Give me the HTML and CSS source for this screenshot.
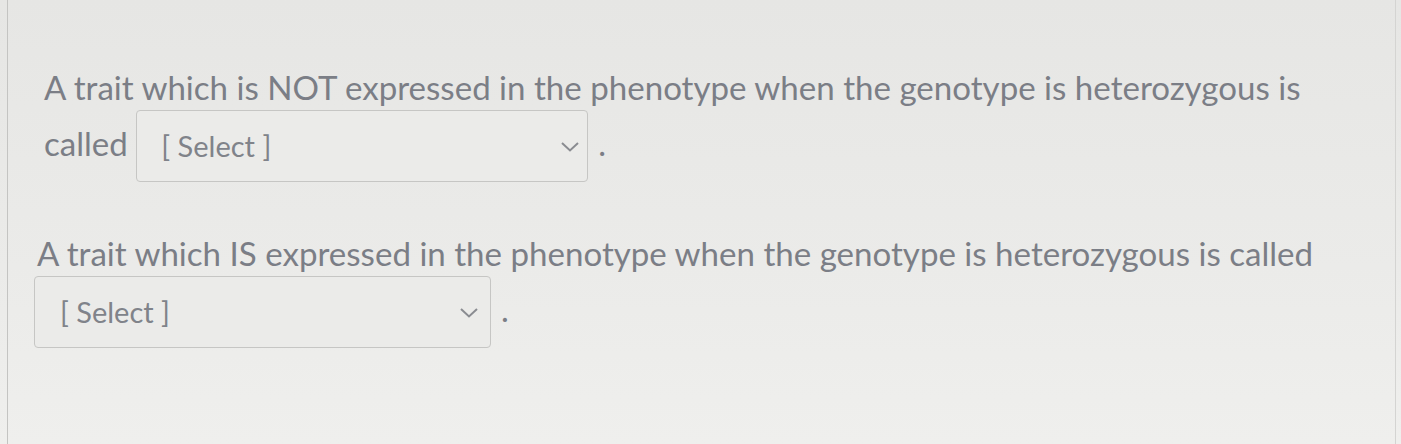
FILE: index.html
```html
<!DOCTYPE html>
<html lang="en">
<head>
    <meta charset="UTF-8">
    <meta name="viewport" content="width=device-width, initial-scale=1.0">
    <title>Quiz question</title>
    <link rel="stylesheet" href="styles.css">
</head>
<body>
    <div class="question-card">
        <p class="question first">
            <span>A trait which is NOT expressed in the phenotype when the genotype is heterozygous is</span>
            <span>called</span> <span class="dropdown"><span class="dropdown-label">[ Select ]</span><svg class="chevron" width="18" height="10" viewBox="0 0 18 10"><path d="M1 1 L9 8.5 L17 1" fill="none" stroke="#8a8c91" stroke-width="2"/></svg></span><span class="stop">.</span>
        </p>
        <p class="question second">
            <span>A trait which IS expressed in the phenotype when the genotype is heterozygous is called</span>
            <span class="dropdown wide"><span class="dropdown-label">[ Select ]</span><svg class="chevron" width="18" height="10" viewBox="0 0 18 10"><path d="M1 1 L9 8.5 L17 1" fill="none" stroke="#8a8c91" stroke-width="2"/></svg></span><span class="stop">.</span>
        </p>
    </div>
</body>
</html>
```

FILE: styles.css
```css
html, body {
    height: 100%;
}
body {
    margin: 0;
    font-family: Lato, "Liberation Sans", sans-serif;
    color: #7b7e86;
    background: linear-gradient(to bottom, #e6e6e4 0%, #ebebe9 60%, #efefed 100%);
}
.question-card {
    margin: 0 5px 0 7px;
    height: 100%;
    box-sizing: border-box;
    border-left: 1px solid #c4c4c2;
    border-right: 1px solid #d4d4d2;
    padding: 64px 20px 0 36px;
}
.question {
    margin: 0;
    font-size: 33.1px;
    line-height: 46px;
}
.question.second {
    margin-top: 48px;
    margin-left: -7px;
}
.dropdown {
    display: inline-flex;
    align-items: center;
    justify-content: space-between;
    box-sizing: border-box;
    width: 452px;
    height: 72px;
    margin: 0 8px 0 0;
    padding: 0 8px 0 24px;
    border: 1px solid #c6c6c4;
    border-radius: 4px;
    background: #ebebe9;
    font-size: 29px;
    color: #80838a;
    vertical-align: -1px;
}
.dropdown.wide {
    width: 457px;
    margin-left: -3px;
    padding-left: 25px;
    padding-right: 12px;
}
.chevron {
    margin-top: 2px;
}
.stop {
    display: inline-block;
    padding-left: 2px;
}
```
